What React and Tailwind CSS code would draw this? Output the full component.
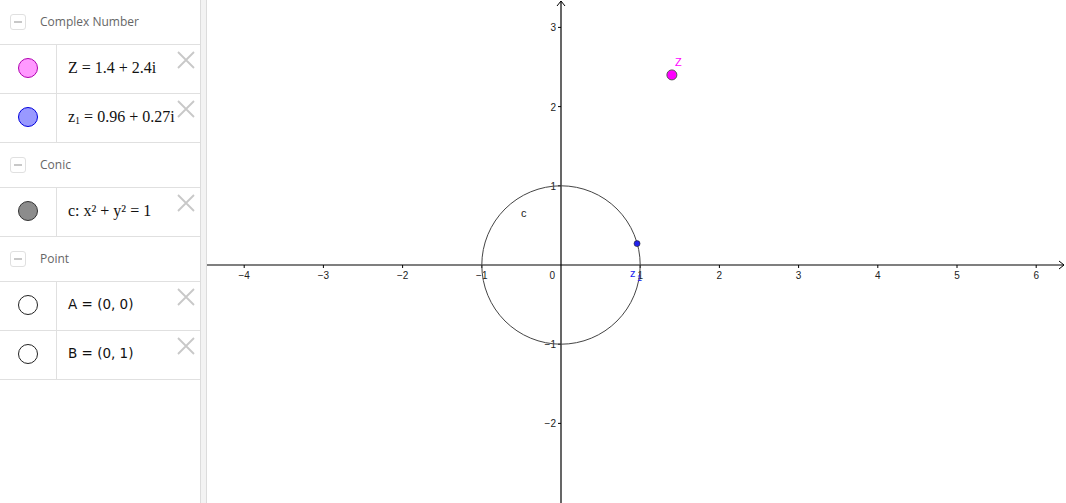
import React from 'react'

const groups = [
  {
    title: 'Complex Number',
    rows: [
      { dot: 'bg-[#ff99ff] border-[#b000b0]', text: <span className="font-['Liberation_Serif',serif] text-[16px]">Z = 1.4 + 2.4i</span> },
      {
        dot: 'bg-[#9999ff] border-[#0000dd]',
        text: (
          <span className="font-['Liberation_Serif',serif] text-[16px]">
            z<sub className="text-[10px]">1</sub> = 0.96 + 0.27i
          </span>
        ),
      },
    ],
  },
  {
    title: 'Conic',
    rows: [
      { dot: 'bg-[#8c8c8c] border-[#333]', text: <span className="font-['Liberation_Serif',serif] text-[16px]">c: x² + y² = 1</span> },
    ],
  },
  {
    title: 'Point',
    rows: [
      { dot: 'bg-white border-[#222]', text: <span className="font-['DejaVu_Sans',sans-serif] text-[13.5px]">A = (0, 0)</span> },
      { dot: 'bg-white border-[#222]', text: <span className="font-['DejaVu_Sans',sans-serif] text-[13.5px]">B = (0, 1)</span> },
    ],
  },
]

const CloseX = () => (
  <svg width="18" height="18" viewBox="0 0 18 18" className="absolute right-[5px] top-[6px]">
    <path d="M1 1 L17 17 M17 1 L1 17" stroke="#c8c8c8" strokeWidth="1.8" />
  </svg>
)

const Algebra = () => (
  <div className="w-[201px] border-r border-[#dcdcdc] bg-white font-['Open_Sans',sans-serif]">
    {groups.map((g) => (
      <div key={g.title}>
        <div className="h-[45px] flex items-center border-b border-[#e0e0e0]">
          <div className="ml-[10px] w-[16px] h-[16px] rounded-[3px] border border-[#e0e0e0] flex items-center justify-center">
            <div className="w-[8px] h-[1.5px] bg-[#c8c8c8]" />
          </div>
          <span className="ml-[14px] text-[12px] text-[#666]">{g.title}</span>
        </div>
        {g.rows.map((r, i) => (
          <div key={i} className="relative h-[49px] flex border-b border-[#e0e0e0]">
            <div className="w-[57px] pb-[3px] border-r border-[#e0e0e0] flex items-center justify-center">
              <div className={`w-[20px] h-[20px] rounded-full border ${r.dot}`} />
            </div>
            <div className="flex-1 pb-[3px] flex items-center pl-[11px] text-[#111] leading-none">{r.text}</div>
            <CloseX />
          </div>
        ))}
      </div>
    ))}
  </div>
)

const ox = 354
const oy = 265
const u = 79.2

const Graph = () => {
  const xs = [-4, -3, -2, -1, 1, 2, 3, 4, 5, 6]
  const ys = [3, 2, 1, -1, -2]
  const lbl = (n) => (n < 0 ? '\u2212' + Math.abs(n) : String(n))
  return (
    <div className="flex-1 bg-white">
      <svg width="859" height="503" className="block" fontFamily="Liberation Sans, Arial, sans-serif" fontSize="10">
        <line x1="0" y1={oy} x2="857" y2={oy} stroke="#000" strokeWidth="1.2" />
        <path d={`M852 ${oy - 4} L857 ${oy} L852 ${oy + 4}`} stroke="#000" fill="none" />
        <line x1={ox} y1="1" x2={ox} y2="503" stroke="#000" strokeWidth="1.2" />
        <path d={`M${ox - 4} 6 L${ox} 1 L${ox + 4} 6`} stroke="#000" fill="none" />
        {xs.map((n) => (
          <g key={n}>
            <line x1={ox + n * u} y1={oy} x2={ox + n * u} y2={oy + 3} stroke="#000" />
            <text x={ox + n * u} y={oy + 14} textAnchor="middle" fill="#222">{lbl(n)}</text>
          </g>
        ))}
        {ys.map((n) => (
          <g key={n}>
            <line x1={ox - 3} y1={oy - n * u} x2={ox} y2={oy - n * u} stroke="#000" />
            <text x={ox - 5} y={oy - n * u + 4} textAnchor="end" fill="#222">{lbl(n)}</text>
          </g>
        ))}
        <text x={ox - 6} y={oy + 14} textAnchor="end" fill="#222">0</text>
        <circle cx={ox} cy={oy} r={u} fill="none" stroke="#444" strokeWidth="1" />
        <text x={ox - 40} y={oy - 48} fontSize="11" fill="#222">c</text>
        <circle cx={ox + 1.4 * u} cy={oy - 2.4 * u} r="5" fill="#ff00ff" stroke="#555" />
        <text x={ox + 114} y={oy - 199} fontSize="11" fill="#ff00ff">Z</text>
        <circle cx={ox + 0.96 * u} cy={oy - 0.27 * u} r="3" fill="#2222ee" stroke="#222" strokeWidth="0.6" />
        <text x={ox + 69} y={oy + 12} fontSize="11" fill="#2222ee">z</text>
        <text x={ox + 76} y={oy + 16} fontSize="9" fill="#2222ee">1</text>
      </svg>
    </div>
  )
}

export default function App() {
  return (
    <div className="w-[1066px] h-[503px] flex overflow-hidden bg-white">
      <Algebra />
      <div className="w-[6px] bg-[#f3f3f3] border-r border-[#dcdcdc]" />
      <Graph />
    </div>
  )
}
